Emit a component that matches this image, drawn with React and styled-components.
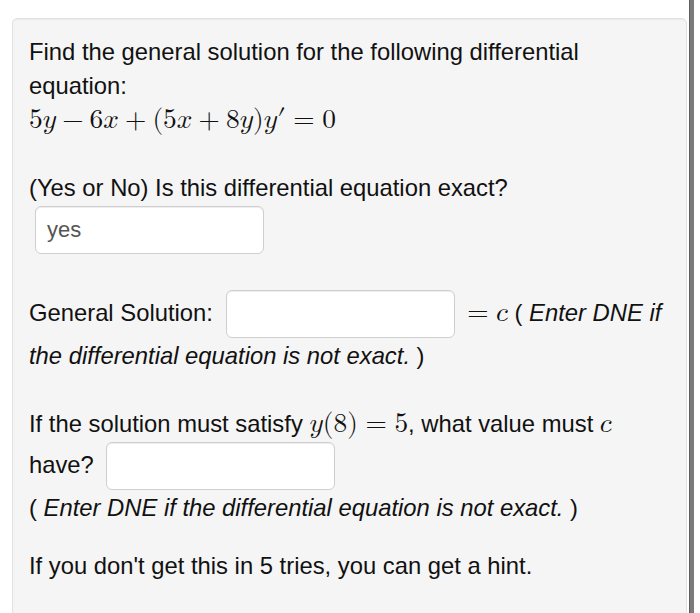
import React from "react";
import styled, { createGlobalStyle } from "styled-components";

const Global = createGlobalStyle`
  html, body { margin: 0; padding: 0; background: #fff; overflow: hidden; }
  body { font-family: "Liberation Sans", Arial, sans-serif; }
`;

const Page = styled.div`
  display: flex;
  height: 613px;
  width: 700px;
  overflow: hidden;
`;

const Main = styled.div`
  flex: 1;
  padding: 18px 2px 0 12px;
  min-width: 0;
`;

const Bar = styled.div`
  width: 5px;
  background: #7b7b7b;
  border-left: 1px solid #5e5e5e;
  box-sizing: border-box;
`;

const Gutter = styled.div`
  width: 6px;
  background: #fff;
`;

const Card = styled.div`
  background: #f5f5f5;
  border: 1px solid #e3e3e3;
  border-radius: 5px;
  box-shadow: inset 0 1px 1px rgba(0, 0, 0, 0.05);
  padding: 16px 16px 80px 16px;
  color: #111;
  font-size: 23.8px;
  line-height: 34px;
`;

const Para = styled.div`
  margin: ${(p) => p.$mt || 0}px 0 0 0;
`;

const Math = styled.span`
  font-family: "Latin Modern Math", "Liberation Serif", serif;
  font-size: 27.4px;
  line-height: 1;
  white-space: nowrap;
`;

const Op = styled.span`
  padding: 0 ${(p) => (p.$rel ? "0.278em" : "0.222em")};
  ${(p) => (p.$noLeft ? "padding-left: 0;" : "")}
`;

const Field = styled.input`
  box-sizing: border-box;
  width: 229px;
  height: 48px;
  margin: 1px 6px;
  padding: 0 11px;
  vertical-align: baseline;
  border: 1px solid #cfcfcf;
  border-radius: 6px;
  background: #fff;
  box-shadow: inset 0 1px 1px rgba(0, 0, 0, 0.075);
  font-family: "Liberation Sans", Arial, sans-serif;
  font-size: 22px;
  color: #555;
  outline: none;
`;

const Em = styled.i`
  font-style: italic;
`;

const y = "\u{1D466}";
const x = "\u{1D465}";
const c = "\u{1D450}";

export default function App() {
  return (
    <>
      <Global />
      <Page>
        <Main>
          <Card>
            <Para>
              Find the general solution for the following differential equation:
              <br />
              <Math>
                5{y}
                <Op>−</Op>6{x}
                <Op>+</Op>(5{x}
                <Op>+</Op>8{y}){y}′<Op $rel>=</Op>0
              </Math>
              <br />
              <br />
              (Yes or No) Is this differential equation exact?
              <br />
              <Field defaultValue="yes" />
              <br />
              <br />
              General Solution: <Field /> <Math><Op $rel $noLeft>=</Op>{c}</Math> ( <Em>Enter DNE if the differential equation is not exact.</Em> )
              <br />
              <br />
              If the solution must satisfy <Math>{y}(8)<Op $rel>=</Op>5</Math>, what value must <Math>{c}</Math> have? <Field />
              <br />( <Em>Enter DNE if the differential equation is not exact.</Em> )
            </Para>
            <Para $mt={24}>If you don't get this in 5 tries, you can get a hint.</Para>
          </Card>
        </Main>
        <Bar />
        <Gutter />
      </Page>
    </>
  );
}
